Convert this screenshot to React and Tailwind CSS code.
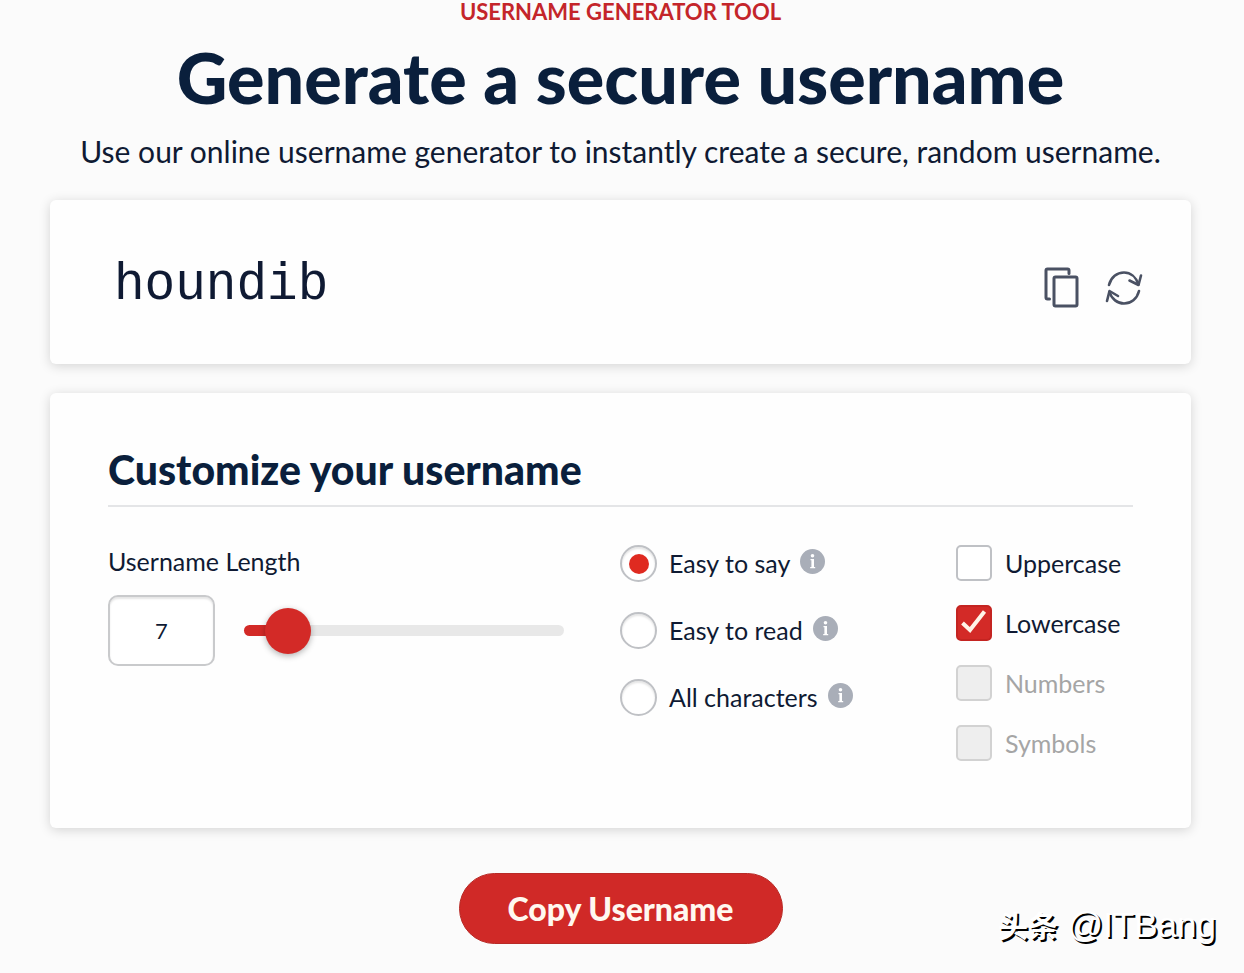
import { useState } from 'react';

const MIN_LENGTH = 3;
const MAX_LENGTH = 55;

const modes = [
  { id: 'say', label: 'Easy to say' },
  { id: 'read', label: 'Easy to read' },
  { id: 'all', label: 'All characters' },
];

const charsets = [
  { id: 'upper', label: 'Uppercase' },
  { id: 'lower', label: 'Lowercase' },
  { id: 'numbers', label: 'Numbers', disabled: true },
  { id: 'symbols', label: 'Symbols', disabled: true },
];

function CopyIcon() {
  return (
    <svg width="36" height="42" viewBox="0 0 36 42" fill="none" stroke="#4a5163" strokeWidth="3" strokeLinecap="round" strokeLinejoin="round">
      <path d="M26 6.500V3.500a1.500 1.500 0 0 0-1.500-1.500h-20A1.500 1.500 0 0 0 3 3.500v27A1.500 1.500 0 0 0 4.500 32H6.500" />
      <rect x="11" y="10" width="23" height="29" rx="1.500" />
    </svg>
  );
}

function RefreshIcon() {
  return (
    <svg width="38" height="34" viewBox="0 0 38 34" fill="none" stroke="#4a5163" strokeWidth="2.600" strokeLinecap="round" strokeLinejoin="round">
      <path d="M4 14C6 6 12 1.500 19 1.500c6.500 0 12 4.500 14.500 12" />
      <path d="M24.500 9.500l9 4.500L36 4.500" />
      <path d="M34 20c-2 8-8 12.500-15 12.500C12.500 32.500 6.500 28 4.500 21" />
      <path d="M2 30l2.500-10L13 25" />
    </svg>
  );
}

function InfoIcon() {
  return (
    <svg width="25" height="25" viewBox="0 0 25 25">
      <circle cx="12.500" cy="12.500" r="12.500" fill="#a9aeb8" />
      <circle cx="12.500" cy="6.800" r="1.800" fill="#fff" />
      <path d="M10.500 10h3.500v8h1.200v1.300h-5v-1.300h1.200v-6.700h-0.900z" fill="#fff" />
    </svg>
  );
}

function LengthSlider({ value, onChange }) {
  const ratio = (value - MIN_LENGTH) / (MAX_LENGTH - MIN_LENGTH);
  const fill = `calc(23px + (100% - 46px) * ${ratio})`;

  return (
    <input
      type="range"
      aria-label="Username length slider"
      min={MIN_LENGTH}
      max={MAX_LENGTH}
      value={value}
      onChange={(e) => onChange(Number(e.target.value))}
      style={{ backgroundImage: `linear-gradient(to right, #d32a27 ${fill}, #e8e8e8 ${fill})` }}
      className="h-[11px] w-80 cursor-pointer appearance-none rounded-full [&::-webkit-slider-thumb]:size-[46px] [&::-webkit-slider-thumb]:appearance-none [&::-webkit-slider-thumb]:rounded-full [&::-webkit-slider-thumb]:bg-[#d32a27] [&::-webkit-slider-thumb]:shadow-[0_2px_6px_rgba(0,0,0,0.3)]"
    />
  );
}

export default function App() {
  const [length, setLength] = useState(7);
  const [mode, setMode] = useState('say');
  const [checked, setChecked] = useState(['lower']);

  const toggle = (id) => {
    setChecked(checked.includes(id) ? checked.filter((c) => c !== id) : [...checked, id]);
  };

  return (
    <main className="relative flex min-h-screen flex-col bg-[#fbfbfb] pr-[53px] pl-[50px] font-['Lato',sans-serif] text-[#0f1a33]">
      <header className="text-center">
        <p className="text-[22px] leading-6 font-bold text-[#c4252a]">USERNAME GENERATOR TOOL</p>
        <h1 className="mt-[11px] text-[70px] leading-[84px] font-black text-[#0a1f3c]">Generate a secure username</h1>
        <p className="mt-3 text-[30px] leading-10">Use our online username generator to instantly create a secure, random username.</p>
      </header>

      <section className="mt-[29px] flex h-[164px] items-center justify-between rounded-md bg-[#fefefe] pr-12 pl-16 shadow-[0_2px_12px_rgba(0,0,0,0.16)]">
        <output className="mt-2 font-['Liberation_Mono',monospace] text-[51px] leading-[60px]">houndib</output>
        <div className="mt-3 flex items-center gap-[26px]">
          <button aria-label="Copy username"><CopyIcon /></button>
          <button aria-label="Generate again"><RefreshIcon /></button>
        </div>
      </section>

      <section className="mt-[29px] rounded-md bg-[#fefefe] px-[58px] pt-[53px] pb-[67px] shadow-[0_2px_12px_rgba(0,0,0,0.16)]">
        <h2 className="border-b-2 border-[#e4e5e7] pb-[11px] text-[41px] leading-[48px] font-black text-[#0a1f3c]">Customize your username</h2>
        <div className="mt-[38px] grid grid-cols-[1fr_336px_177px]">
          <div>
            <label htmlFor="length" className="block text-[25px] leading-8">Username Length</label>
            <div className="mt-[18px] flex items-center gap-[29px]">
              <input
                id="length"
                type="text"
                value={length}
                onChange={(e) => setLength(Number(e.target.value) || MIN_LENGTH)}
                className="h-[71px] w-[107px] rounded-[10px] border-2 border-[#c9cacc] bg-white text-center text-[22px] shadow-[inset_0_2px_2px_rgba(0,0,0,0.1)]"
              />
              <LengthSlider value={length} onChange={setLength} />
            </div>
          </div>

          <div className="flex flex-col gap-[30px]">
            {modes.map(({ id, label }) => (
              <div key={id} className="flex items-center">
                <label className="flex items-center gap-3 text-[25px] leading-[37px]">
                  <input
                    type="radio"
                    name="mode"
                    checked={mode === id}
                    onChange={() => setMode(id)}
                    className="grid size-[37px] appearance-none place-items-center rounded-full border-2 border-[#bfc1c5] bg-white shadow-[inset_0_2px_2px_rgba(0,0,0,0.1)] before:size-5 before:rounded-full checked:before:bg-[#df2a20]"
                  />
                  {label}
                </label>
                <button aria-label={`About: ${label}`} className="mb-1 ml-[10px]"><InfoIcon /></button>
              </div>
            ))}
          </div>

          <div className="flex flex-col gap-6">
            {charsets.map(({ id, label, disabled }) => (
              <label key={id} className="flex items-center gap-[13px] text-[25px] leading-9 has-disabled:text-[#a5a5a5]">
                <span className="relative grid size-9 place-items-center">
                  <input
                    type="checkbox"
                    disabled={disabled}
                    checked={checked.includes(id)}
                    onChange={() => toggle(id)}
                    className="peer size-9 appearance-none rounded-[5px] border-2 border-[#bfc1c5] bg-white checked:border-[#c42421] checked:bg-[#d32a27] disabled:border-[#d2d2d2] disabled:bg-[#eeeeee]"
                  />
                  <svg className="pointer-events-none invisible absolute peer-checked:visible" width="36" height="36" viewBox="0 0 36 36" fill="none" stroke="#fff4e8" strokeWidth="4">
                    <path d="M6.500 18l7.500 7L28.500 6.500" />
                  </svg>
                </span>
                {label}
              </label>
            ))}
          </div>
        </div>
      </section>

      <button className="mt-[45px] h-[71px] w-[324px] self-center rounded-full border border-[#b82a26] bg-[#d02927] text-[32px] font-black text-[#fff8f0]">
        Copy Username
      </button>

      <p className="absolute right-7 bottom-6 font-['Liberation_Sans','Noto_Sans_CJK_SC',sans-serif] text-[35px] leading-[44px] text-white [text-shadow:2px_2px_0_#000]">
        <span className="text-[30px] font-bold">头条</span> @ITBang
      </p>
    </main>
  );
}
